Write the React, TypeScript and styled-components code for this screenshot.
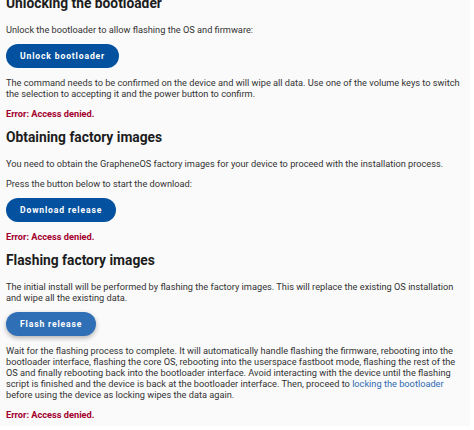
import React from 'react';
import styled, { createGlobalStyle } from 'styled-components';

const GlobalStyle = createGlobalStyle`
  html, body {
    margin: 0;
    padding: 0;
    background: #ffffff;
  }
  body {
    font-family: Roboto, 'Noto Sans', 'Liberation Sans', sans-serif;
    overflow: hidden;
  }
`;

const Page = styled.main`
  width: 470px;
  height: 431px;
  margin-top: -5px;
  box-sizing: border-box;
  padding: 0 6px;
  background: #fafafa;
  color: #333;
  font-size: 9.22px;
  line-height: 11px;
`;

const Section = styled.section`
  display: flex;
  flex-direction: column;
  align-items: flex-start;
  & + & {
    margin-top: 10.5px;
  }
`;

const Heading = styled.h2`
  margin: 0 0 12.5px;
  font-size: 13.8px;
  line-height: 16px;
  font-weight: 700;
  color: #1d1d1d;
`;

const Text = styled.p`
  margin: 0 0 9px;
`;

const ErrorText = styled.p`
  margin: 0;
  font-weight: 700;
  color: #a3002e;
`;

const Button = styled.button<{ $active?: boolean }>`
  height: 24px;
  margin: 0 0 9px;
  padding: 0 14px;
  border: none;
  border-radius: 12px;
  font-family: inherit;
  font-size: 8.6px;
  font-weight: 700;
  letter-spacing: 0.85px;
  color: #fff;
  background: ${(p) => (p.$active ? '#2f6fb6' : '#0451a0')};
  box-shadow: ${(p) => (p.$active ? '0 2px 5px rgba(0, 0, 0, 0.3)' : 'none')};
  cursor: pointer;
`;

const Link = styled.a`
  color: #2d69b3;
  text-decoration: none;
`;

export default function App() {
  return (
    <>
      <GlobalStyle />
      <Page>
        <Section>
          <Heading>Unlocking the bootloader</Heading>
          <Text>Unlock the bootloader to allow flashing the OS and firmware:</Text>
          <Button>Unlock bootloader</Button>
          <Text>
            The command needs to be confirmed on the device and will wipe all data. Use one of the volume keys to
            switch the selection to accepting it and the power button to confirm.
          </Text>
          <ErrorText>Error: Access denied.</ErrorText>
        </Section>
        <Section>
          <Heading>Obtaining factory images</Heading>
          <Text>
            You need to obtain the GrapheneOS factory images for your device to proceed with the installation
            process.
          </Text>
          <Text>Press the button below to start the download:</Text>
          <Button>Download release</Button>
          <ErrorText>Error: Access denied.</ErrorText>
        </Section>
        <Section>
          <Heading>Flashing factory images</Heading>
          <Text>
            The initial install will be performed by flashing the factory images. This will replace the existing OS
            installation and wipe all the existing data.
          </Text>
          <Button $active>Flash release</Button>
          <Text>
            Wait for the flashing process to complete. It will automatically handle flashing the firmware, rebooting
            into the bootloader interface, flashing the core OS, rebooting into the userspace fastboot mode, flashing
            the rest of the OS and finally rebooting back into the bootloader interface. Avoid interacting with the
            device until the flashing script is finished and the device is back at the bootloader interface. Then,
            proceed to <Link href="#locking-the-bootloader">locking the bootloader</Link> before using the device as
            locking wipes the data again.
          </Text>
          <ErrorText>Error: Access denied.</ErrorText>
        </Section>
      </Page>
    </>
  );
}
